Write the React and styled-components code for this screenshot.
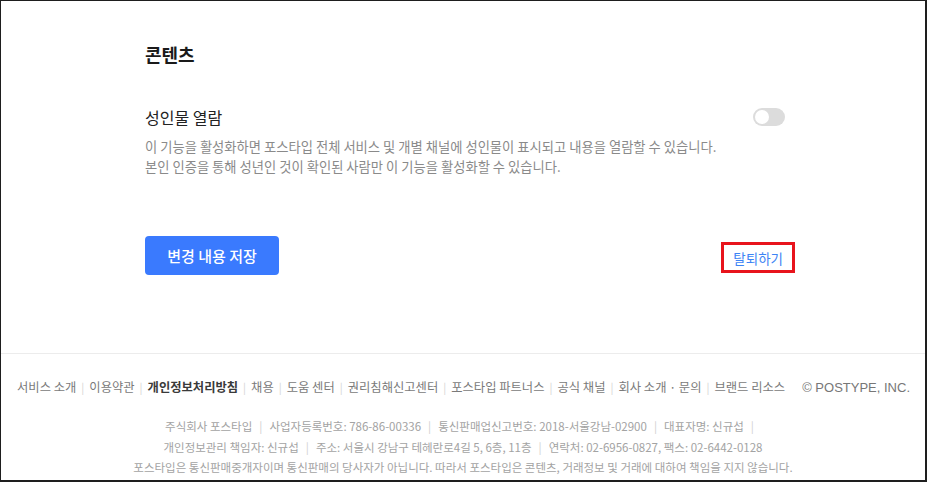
import React from "react";
import styled, { createGlobalStyle } from "styled-components";

const Global = createGlobalStyle`
  html, body { margin: 0; padding: 0; background: #fff; }
  body { font-family: "Noto Sans CJK KR", "Noto Sans", sans-serif; }
  * { box-sizing: border-box; }
`;

const Frame = styled.div`
  width: 927px;
  height: 482px;
  border-style: solid;
  border-color: #1e1e1e;
  border-width: 1px 2px 2px 1px;
  display: flex;
  flex-direction: column;
  overflow: hidden;
`;

const Main = styled.main`
  width: 640px;
  margin: 0 0 0 144px;
  padding-top: 40px;
  height: 352px;
  display: flex;
  flex-direction: column;
`;

const Title = styled.h2`
  margin: 0;
  font-size: 18px;
  font-weight: 700;
  color: #1a1a1a;
  line-height: 26px;
`;

const Setting = styled.section`
  margin-top: 38px;
  display: flex;
  flex-direction: column;
`;

const SettingHead = styled.div`
  display: flex;
  justify-content: space-between;
  align-items: center;
  height: 24px;
`;

const SettingName = styled.span`
  font-size: 16px;
  color: #222;
  line-height: 24px;
`;

const Toggle = styled.span`
  width: 32px;
  height: 18px;
  border-radius: 9px;
  background: #dcdcdc;
  position: relative;
  display: inline-block;
  &::after {
    content: "";
    position: absolute;
    left: 2px;
    top: 2px;
    width: 14px;
    height: 14px;
    border-radius: 50%;
    background: #fff;
  }
`;

const Desc = styled.p`
  margin: 8px 0 0;
  font-size: 13.3px;
  line-height: 20px;
  color: #8a8a8a;
`;

const Actions = styled.div`
  margin-top: 59px;
  display: flex;
  justify-content: space-between;
  align-items: center;
`;

const SaveButton = styled.button`
  width: 134px;
  height: 39px;
  border: none;
  border-radius: 4px;
  background: #3a7afe;
  color: #fff;
  font-family: inherit;
  font-size: 15px;
  font-weight: 500;
  cursor: pointer;
`;

const LeaveBox = styled.div`
  border: 3px solid #e8141c;
  padding: 2px 9px 1px;
  margin-right: -10px;
  margin-top: 4px;
`;

const LeaveLink = styled.a`
  display: block;
  font-size: 13.5px;
  color: #3d84f5;
  text-decoration: none;
  line-height: 22px;
`;

const Footer = styled.footer`
  border-top: 1px solid #ececec;
  flex: 1;
  display: flex;
  flex-direction: column;
`;

const LinkRow = styled.div`
  display: flex;
  justify-content: space-between;
  align-items: center;
  padding: 0 15px 0 16px;
  margin-top: 22px;
  height: 22px;
  white-space: nowrap;
`;

const Links = styled.nav`
  display: flex;
  align-items: center;
  font-size: 12.3px;
  color: #7a7a7a;
  white-space: nowrap;
`;

const FooterLink = styled.span`
  font-weight: ${(p) => (p.$bold ? 700 : 400)};
  color: ${(p) => (p.$bold ? "#3a3a3a" : "#7a7a7a")};
`;

const Sep = styled.span`
  color: #d4d4d4;
  margin: 0 5px;
  font-size: 11px;
`;

const Copy = styled.span`
  font-family: "Liberation Sans", Arial, sans-serif;
  font-size: 13px;
  color: #777;
`;

const Info = styled.div`
  margin-top: 18px;
  text-align: center;
  font-size: 11.5px;
  line-height: 20.5px;
  color: #a3a3a3;
  white-space: nowrap;
`;

const InfoSep = styled.span`
  color: #cfcfcf;
  margin: 0 7px;
`;

const links = [
  "서비스 소개",
  "이용약관",
  "개인정보처리방침",
  "채용",
  "도움 센터",
  "권리침해신고센터",
  "포스타입 파트너스",
  "공식 채널",
  "회사 소개 · 문의",
  "브랜드 리소스",
];

const infoLine = (items) =>
  items.map((t, i) => (
    <React.Fragment key={i}>
      {i > 0 && <InfoSep>|</InfoSep>}
      {t}
    </React.Fragment>
  ));

export default function App() {
  return (
    <>
      <Global />
      <Frame>
        <Main>
          <Title>콘텐츠</Title>
          <Setting>
            <SettingHead>
              <SettingName>성인물 열람</SettingName>
              <Toggle />
            </SettingHead>
            <Desc>
              이 기능을 활성화하면 포스타입 전체 서비스 및 개별 채널에 성인물이 표시되고 내용을 열람할 수 있습니다.
              <br />
              본인 인증을 통해 성년인 것이 확인된 사람만 이 기능을 활성화할 수 있습니다.
            </Desc>
          </Setting>
          <Actions>
            <SaveButton>변경 내용 저장</SaveButton>
            <LeaveBox>
              <LeaveLink href="#">탈퇴하기</LeaveLink>
            </LeaveBox>
          </Actions>
        </Main>
        <Footer>
          <LinkRow>
            <Links>
              {links.map((l, i) => (
                <React.Fragment key={l}>
                  {i > 0 && <Sep>|</Sep>}
                  <FooterLink $bold={l === "개인정보처리방침"}>{l}</FooterLink>
                </React.Fragment>
              ))}
            </Links>
            <Copy>© POSTYPE, INC.</Copy>
          </LinkRow>
          <Info>
            <div>
              {infoLine([
                "주식회사 포스타입",
                "사업자등록번호: 786-86-00336",
                "통신판매업신고번호: 2018-서울강남-02900",
                "대표자명: 신규섭",
                "",
              ])}
            </div>
            <div>
              {infoLine([
                "개인정보관리 책임자: 신규섭",
                "주소: 서울시 강남구 테헤란로4길 5, 6층, 11층",
                "연락처: 02-6956-0827, 팩스: 02-6442-0128",
              ])}
            </div>
            <div>
              포스타입은 통신판매중개자이며 통신판매의 당사자가 아닙니다. 따라서 포스타입은 콘텐츠, 거래정보 및 거래에 대하여 책임을 지지 않습니다.
            </div>
          </Info>
        </Footer>
      </Frame>
    </>
  );
}
